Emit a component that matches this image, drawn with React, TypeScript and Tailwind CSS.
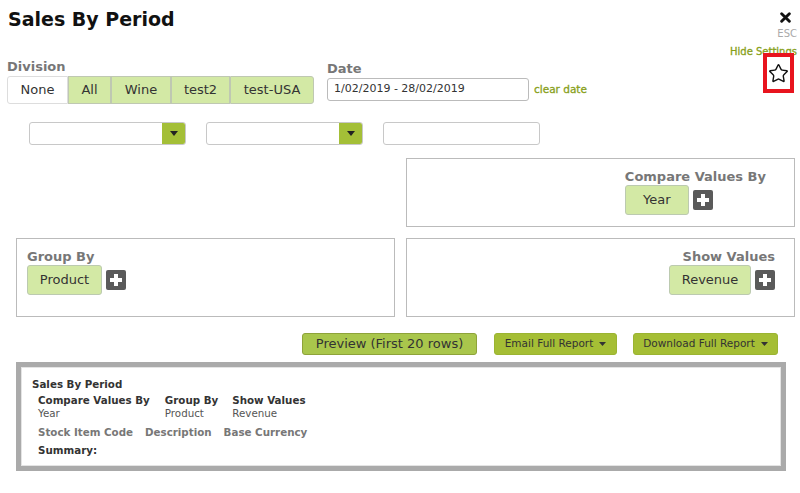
import { Star } from 'lucide-react';

const font = { fontFamily: '"DejaVu Sans", Verdana, sans-serif' };

function PlusIcon() {
    return (
        <svg width="20" height="20" viewBox="0 0 20 20" className="shrink-0">
            <rect x="0" y="0" width="20" height="20" rx="2" fill="#5a5a5a" />
            <rect x="8" y="4" width="4" height="12" fill="#fff" />
            <rect x="4" y="8" width="12" height="4" fill="#fff" />
        </svg>
    );
}

function Chip({ label, width }: { label: string; width: string }) {
    return (
        <div className={`${width} h-[30px] flex items-center justify-center bg-[#d3e9a5] border border-[#bccab0] rounded-[3px] text-[13px] text-[#333]`}>
            {label}
        </div>
    );
}

function SelectBox() {
    return (
        <div className="w-[157px] h-[23px] flex border border-[#c8c8c8] rounded-[3px] overflow-hidden bg-white">
            <div className="flex-1" />
            <div className="w-[23px] bg-[#a4bf37] flex items-center justify-center">
                <svg width="8" height="5" viewBox="0 0 8 5">
                    <path d="M0 0 H8 L4 5 Z" fill="#222" />
                </svg>
            </div>
        </div>
    );
}

export default function App() {
    const divisions = [
        { label: 'None', w: 'w-[61px]', active: false },
        { label: 'All', w: 'w-[43px]', active: true },
        { label: 'Wine', w: 'w-[60px]', active: true },
        { label: 'test2', w: 'w-[59px]', active: true },
        { label: 'test-USA', w: 'w-[84px]', active: true },
    ];

    return (
        <div className="relative w-[800px] h-[493px] bg-white overflow-hidden text-[#333]" style={font}>
            {/* Header */}
            <div className="flex justify-between">
                <h1 className="pl-[8px] pt-[7px] text-[19px] leading-[24px] font-bold text-[#111]">Sales By Period</h1>
                <div className="flex flex-col items-end pr-[3px] pt-[12px]">
                    <svg width="11" height="11" viewBox="0 0 10 10" className="mr-[6px]">
                        <path d="M1.5 1.5 L8.5 8.5 M8.5 1.5 L1.5 8.5" stroke="#111" strokeWidth="2.6" strokeLinecap="round" />
                    </svg>
                    <span className="text-[10px] leading-[12px] mt-[5px] text-[#aaa]">ESC</span>
                    <span className="text-[10px] leading-[13px] mt-[5px] text-[#87a01a] [-webkit-text-stroke:0.3px_#87a01a]">Hide Settings</span>
                </div>
            </div>

            {/* Favourite star, highlighted */}
            <div className="absolute left-[763px] top-[53px] w-[31px] h-[40px] border-[4px] border-[#e8141e] flex items-center justify-center bg-white">
                <Star size={21} strokeWidth={1.6} color="#111" />
            </div>

            {/* Division + Date */}
            <div className="flex items-end pl-[7px] mt-[2px]">
                <div className="flex flex-col">
                    <span className="text-[13px] leading-[14px] font-bold text-[#777] mb-[2px]">Division</span>
                    <div className="flex h-[28px]">
                        {divisions.map((d, i) => (
                            <div
                                key={d.label}
                                className={`${d.w} flex items-center justify-center text-[13px] border ${i === 0 ? 'rounded-l-[3px] border-[#ddd] bg-white' : 'border-[#bfc8b2] bg-[#d3e9a5]'} ${i === divisions.length - 1 ? 'rounded-r-[3px]' : ''}`}
                            >
                                {d.label}
                            </div>
                        ))}
                    </div>
                </div>
                <div className="flex flex-col ml-[13px] mb-[3px]">
                    <span className="text-[13px] leading-[14px] font-bold text-[#777] mb-[2px]">Date</span>
                    <div className="flex items-center">
                        <div className="w-[202px] h-[23px] border border-[#bbb] rounded-[3px] px-[6px] flex items-center text-[11px] text-[#333]">
                            1/02/2019 - 28/02/2019
                        </div>
                        <span className="ml-[5px] text-[10.5px] text-[#87a01a] [-webkit-text-stroke:0.3px_#87a01a]">clear date</span>
                    </div>
                </div>
            </div>

            {/* Filter selects */}
            <div className="flex gap-[20px] pl-[29px] mt-[18px]">
                <SelectBox />
                <SelectBox />
                <div className="w-[157px] h-[23px] border border-[#c8c8c8] rounded-[3px]" />
            </div>

            {/* Pivot boxes */}
            <div className="grid grid-cols-[379px_389px] gap-x-[11px] gap-y-[11px] pl-[16px] mt-[13px]">
                <div />
                <div className="h-[69px] border border-[#bbb] flex justify-end pr-[28px] pt-[11px]">
                    <div className="flex flex-col">
                        <span className="text-[13px] leading-[14px] font-bold text-[#777] text-right mb-[1px]">Compare Values By</span>
                        <div className="flex items-center gap-[4px]">
                            <Chip label="Year" width="w-[64px]" />
                            <PlusIcon />
                        </div>
                    </div>
                </div>
                <div className="h-[79px] border border-[#bbb] pl-[10px] pt-[11px]">
                    <div className="flex flex-col">
                        <span className="text-[13px] leading-[14px] font-bold text-[#777] mb-[1px]">Group By</span>
                        <div className="flex items-center gap-[4px]">
                            <Chip label="Product" width="w-[75px]" />
                            <PlusIcon />
                        </div>
                    </div>
                </div>
                <div className="h-[79px] border border-[#bbb] flex justify-end pr-[19px] pt-[11px]">
                    <div className="flex flex-col">
                        <span className="text-[13px] leading-[14px] font-bold text-[#777] text-right mb-[1px]">Show Values</span>
                        <div className="flex items-center gap-[4px]">
                            <Chip label="Revenue" width="w-[82px]" />
                            <PlusIcon />
                        </div>
                    </div>
                </div>
            </div>

            {/* Actions */}
            <div className="flex justify-end items-center pr-[22px] mt-[16px]">
                <button className="w-[175px] h-[22px] bg-[#a9c64c] border border-[#8ea33a] rounded-[3px] text-[13px] text-[#333]">
                    Preview (First 20 rows)
                </button>
                <button className="ml-[17px] w-[123px] h-[22px] bg-[#a5be35] border border-[#9bb432] rounded-[3px] text-[10.5px] text-[#333] flex items-center justify-center gap-[6px]">
                    Email Full Report
                    <svg width="7" height="4" viewBox="0 0 7 4"><path d="M0 0 H7 L3.5 4 Z" fill="#333" /></svg>
                </button>
                <button className="ml-[16px] w-[145px] h-[22px] bg-[#a5be35] border border-[#9bb432] rounded-[3px] text-[10.5px] text-[#333] flex items-center justify-center gap-[6px]">
                    Download Full Report
                    <svg width="7" height="4" viewBox="0 0 7 4"><path d="M0 0 H7 L3.5 4 Z" fill="#333" /></svg>
                </button>
            </div>

            {/* Report preview */}
            <div className="ml-[16px] mt-[7px] w-[770px] h-[109px] border-[5px] border-[#aaa]">
                <div className="h-full border border-[#e4e4e4] pl-[10px] pt-[10px] text-[10.3px] leading-[13px]">
                    <div className="font-bold text-[#333]">Sales By Period</div>
                    <div className="flex pl-[6px] mt-[3px]">
                        <div className="flex flex-col mr-[15px]">
                            <span className="font-bold text-[#333]">Compare Values By</span>
                            <span className="text-[#555]">Year</span>
                        </div>
                        <div className="flex flex-col mr-[14px]">
                            <span className="font-bold text-[#333]">Group By</span>
                            <span className="text-[#555]">Product</span>
                        </div>
                        <div className="flex flex-col">
                            <span className="font-bold text-[#333]">Show Values</span>
                            <span className="text-[#555]">Revenue</span>
                        </div>
                    </div>
                    <div className="flex gap-[12px] pl-[6px] mt-[6px] font-bold text-[#777]">
                        <span>Stock Item Code</span>
                        <span>Description</span>
                        <span>Base Currency</span>
                    </div>
                    <div className="pl-[6px] mt-[5px] font-bold text-[#333]">Summary:</div>
                </div>
            </div>
        </div>
    );
}
